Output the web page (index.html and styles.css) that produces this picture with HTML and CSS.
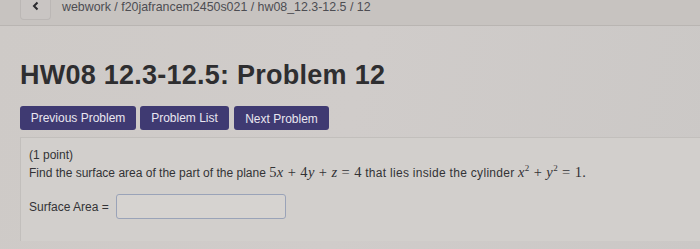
FILE: index.html
```html
<!DOCTYPE html>
<html>
<head>
<meta charset="utf-8">
<link rel="stylesheet" href="styles.css">
</head>
<body>
<div class="topbar">
  <div class="back"><svg width="10" height="10" viewBox="0 0 10 10"><path d="M6.5 1.5 L3 5 L6.5 8.5" fill="none" stroke="#2a2a2e" stroke-width="2"/></svg></div>
  <div class="crumbs">webwork / f20jafrancem2450s021 / hw08_12.3-12.5 / 12</div>
</div>
<div class="page">
  <h1 class="title">HW08 12.3-12.5: Problem 12</h1>
  <div class="buttons">
    <span class="btn btn-prev">Previous Problem</span>
    <span class="btn btn-list">Problem List</span>
    <span class="btn btn-next">Next Problem</span>
  </div>
  <div class="problem">
    <div class="points">(1 point)</div>
    <div class="question">Find the surface area of the part of the plane <span class="math"><span class="num">5</span><i>x</i> + <span class="num">4</span><i>y</i> + <i>z</i> = <span class="num">4</span></span> <span class="tail">that lies inside the cylinder</span> <span class="math"><i>x</i><sup>2</sup> + <i>y</i><sup>2</sup> = <span class="num">1</span>.</span></div>
    <div class="answer"><span class="label">Surface Area =</span><span class="input"></span></div>
  </div>
</div>
</body>
</html>
```
FILE: styles.css
```css
html, body {
  margin: 0;
  padding: 0;
}
body {
  width: 700px;
  height: 249px;
  overflow: hidden;
  background: linear-gradient(100deg, #cecac7 0%, #d0ccca 50%, #cbc8c6 100%);
  font-family: "Liberation Sans", Arial, sans-serif;
  color: #3a3a3c;
}
.topbar {
  height: 25px;
  border-bottom: 1px solid #b9b5b2;
  background: #c7c3c0;
  display: flex;
  align-items: flex-start;
  padding-left: 20px;
}
.back {
  width: 31px;
  height: 20px;
  border: 1px solid #bbb7b5;
  border-top: none;
  border-radius: 0 0 4px 4px;
  background: #c9c5c3;
  display: flex;
  justify-content: center;
  padding-top: 1px;
  box-sizing: border-box;
}
.crumbs {
  margin-left: 11px;
  font-size: 12.4px;
  line-height: 15px;
  color: #4d4d52;
}
.page {
  padding: 0 0 0 20px;
}
.title {
  margin: 0;
  padding-top: 33px;
  font-size: 27px;
  line-height: 32px;
  font-weight: bold;
  color: #2e2e30;
  letter-spacing: 0.25px;
}
.buttons {
  display: flex;
  gap: 4px;
  margin-top: 15px;
}
.btn {
  background: #3f3a72;
  color: #e9e7f0;
  font-size: 12px;
  line-height: 14px;
  padding: 5px 0;
  text-align: center;
  white-space: nowrap;
  border-radius: 3px;
  height: 24px;
  box-sizing: border-box;
}
.btn-prev { width: 116px; }
.btn-list { width: 89px; }
.btn-next { width: 95px; margin-left: 1px; padding-top: 6px; }
.problem {
  margin-top: 7px;
  border-top: 1px solid #c2bfbc;
  border-left: 1px solid #c2bfbc;
  background: #d2cfcc;
  height: 104px;
  padding: 10px 0 0 8px;
  box-sizing: border-box;
  font-size: 12px;
  color: #333336;
}
.points {
  line-height: 14px;
}
.question {
  margin-top: 3px;
  line-height: 14px;
  white-space: nowrap;
}
.tail {
  letter-spacing: 0.3px;
}
.math {
  font-family: "Liberation Serif", "Times New Roman", serif;
  font-size: 14.5px;
  letter-spacing: 0.4px;
}
.math i { font-style: italic; }
.math sup { font-size: 9px; line-height: 0; vertical-align: 6px; }
.answer {
  margin-top: 14px;
  display: flex;
  align-items: center;
}
.label {
  margin-right: 7px;
  padding-top: 1px;
}
.input {
  width: 170px;
  height: 25px;
  box-sizing: border-box;
  border: 1px solid #9aa3b8;
  border-radius: 3px;
  background: #d6d3d0;
}
```
